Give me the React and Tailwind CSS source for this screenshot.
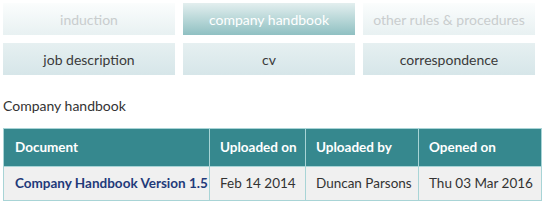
export default function App() {
  const top = [
    { t: "induction", s: "inactive" },
    { t: "company handbook", s: "active" },
    { t: "other rules & procedures", s: "inactive" },
  ];
  const bottom = ["job description", "cv", "correspondence"];
  const cls = {
    inactive: "bg-gradient-to-b from-[#fbfdfd] to-[#e8f1f2] text-[#c9cdce]",
    active: "bg-gradient-to-b from-[#e3efef] to-[#8fc0c2] text-white",
    normal: "bg-gradient-to-b from-[#e6f0f1] to-[#d6e6e9] text-[#3a3a3a]",
  };
  return (
    <div className="w-[546px] h-[205px] bg-white px-[3px] pt-[3px]" style={{ fontFamily: 'Lato, "Noto Sans", sans-serif' }}>
      <div className="grid grid-cols-3 gap-x-2 gap-y-2 w-[532px]">
        {top.map((b) => (
          <div key={b.t} className={`h-8 flex items-center justify-center text-[14px] ${cls[b.s]}`}>{b.t}</div>
        ))}
        {bottom.map((b) => (
          <div key={b} className={`h-8 flex items-center justify-center text-[14px] ${cls.normal}`}>{b}</div>
        ))}
      </div>
      <div className="mt-[23px] text-[14px] text-[#333] leading-4">Company handbook</div>
      <table className="mt-[14px] w-[539px] table-fixed border-collapse text-[13.5px] whitespace-nowrap">
        <colgroup>
          <col className="w-[206px]" />
          <col className="w-[96px]" />
          <col className="w-[113px]" />
          <col />
        </colgroup>
        <thead>
          <tr className="bg-[#36888e] text-white font-bold h-[38px]">
            <th className="border border-[#a8d4d6] text-left pl-[11px]">Document</th>
            <th className="border border-[#a8d4d6] text-left pl-[10px]">Uploaded on</th>
            <th className="border border-[#a8d4d6] text-left pl-[10px]">Uploaded by</th>
            <th className="border border-[#a8d4d6] text-left pl-[10px]">Opened on</th>
          </tr>
        </thead>
        <tbody>
          <tr className="bg-[#f0f0f0] text-[#333] h-[34px]">
            <td className="border border-[#a8d4d6] pl-[11px] font-bold text-[#1f3a7a]">Company Handbook Version 1.5</td>
            <td className="border border-[#a8d4d6] pl-[10px]">Feb 14 2014</td>
            <td className="border border-[#a8d4d6] pl-[10px]">Duncan Parsons</td>
            <td className="border border-[#a8d4d6] pl-[10px]">Thu 03 Mar 2016</td>
          </tr>
        </tbody>
      </table>
    </div>
  );
}
